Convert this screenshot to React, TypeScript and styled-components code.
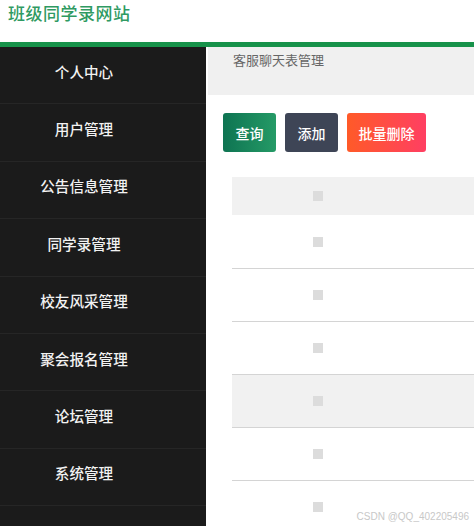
import React from "react";
import styled, { createGlobalStyle } from "styled-components";

const GlobalStyle = createGlobalStyle`
  html, body {
    margin: 0;
    padding: 0;
    background: #fff;
    font-family: "Noto Sans CJK SC", "Noto Sans", sans-serif;
    overflow: hidden;
  }
`;

const Page = styled.div`
  width: 474px;
  height: 526px;
  display: flex;
  flex-direction: column;
  overflow: hidden;
`;

const Header = styled.div`
  height: 42px;
  flex: none;
  display: flex;
  align-items: flex-start;
  padding-left: 8px;
  border-bottom: 5px solid #17924a;
  background: #fff;
`;

const Title = styled.h1`
  margin: 0;
  font-size: 17px;
  font-weight: 500;
  color: #2f9a62;
  letter-spacing: 0.5px;
`;

const Body = styled.div`
  flex: 1;
  display: flex;
  min-height: 0;
`;

const Sidebar = styled.div`
  width: 206px;
  flex: none;
  background: #1b1b1b;
  display: flex;
  flex-direction: column;
`;

const MenuItem = styled.div`
  height: 57.4px;
  flex: none;
  box-sizing: border-box;
  display: flex;
  align-items: center;
  justify-content: center;
  padding: 0 38px 8px 0;
  color: #f2f2f2;
  font-size: 14.6px;
  font-weight: 500;
  border-bottom: 1px solid #262626;
`;

const Main = styled.div`
  flex: 1;
  display: flex;
  flex-direction: column;
  min-width: 0;
  position: relative;
`;

const Crumb = styled.div`
  height: 48px;
  flex: none;
  background: #f0f0f0;
  padding: 3px 0 0 25px;
  box-sizing: border-box;
  color: #666;
  font-size: 13px;
  margin-left: 2px;
`;

const Toolbar = styled.div`
  display: flex;
  gap: 9px;
  padding: 18px 0 0 17px;
`;

const Button = styled.div<{ $bg: string; $w: number }>`
  width: ${(p) => p.$w}px;
  height: 39px;
  border-radius: 3px;
  background: ${(p) => p.$bg};
  color: #fff;
  font-size: 14px;
  font-weight: 500;
  display: flex;
  align-items: center;
  justify-content: center;
`;

const Table = styled.div`
  margin: 25px 0 0 26px;
  display: flex;
  flex-direction: column;
`;

const Row = styled.div<{ $gray?: boolean; $head?: boolean; $line?: boolean }>`
  height: ${(p) => (p.$head ? 38 : 53)}px;
  flex: none;
  box-sizing: border-box;
  background: ${(p) => (p.$gray ? "#f1f1f1" : "#fff")};
  border-top: ${(p) => (p.$line ? "1px solid #d4d4d4" : "none")};
  display: flex;
  align-items: center;
  padding-left: 81px;
`;

const Check = styled.div`
  width: 10px;
  height: 10px;
  background: #dcdcdc;
`;

const Mark = styled.div`
  position: absolute;
  right: 5px;
  bottom: 4px;
  font-family: "Liberation Sans", Arial, sans-serif;
  font-size: 10px;
  color: #c8c8c8;
`;

const menu = ["个人中心", "用户管理", "公告信息管理", "同学录管理", "校友风采管理", "聚会报名管理", "论坛管理", "系统管理"];

const rows = [false, false, false, true, false, false];

export default function App() {
  return (
    <Page>
      <GlobalStyle />
      <Header>
        <Title>班级同学录网站</Title>
      </Header>
      <Body>
        <Sidebar>
          {menu.map((m) => (
            <MenuItem key={m}>{m}</MenuItem>
          ))}
        </Sidebar>
        <Main>
          <Crumb>客服聊天表管理</Crumb>
          <Toolbar>
            <Button $w={53} $bg="linear-gradient(90deg, #0e7452, #259a66)">查询</Button>
            <Button $w={53} $bg="#3e4556">添加</Button>
            <Button $w={79} $bg="linear-gradient(90deg, #ff5a28, #ff3f62)">批量删除</Button>
          </Toolbar>
          <Table>
            <Row $head $gray>
              <Check />
            </Row>
            {rows.map((g, i) => (
              <Row key={i} $gray={g} $line={i > 0}>
                <Check />
              </Row>
            ))}
          </Table>
          <Mark>CSDN @QQ_402205496</Mark>
        </Main>
      </Body>
    </Page>
  );
}
